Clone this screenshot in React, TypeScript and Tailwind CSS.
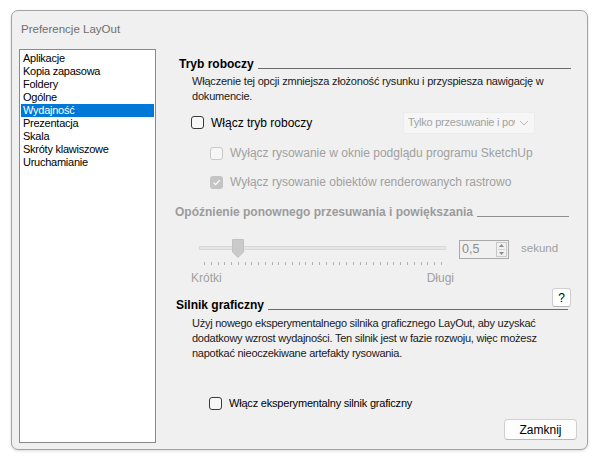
import React from "react";

const NAV_ITEMS = [
  "Aplikacje",
  "Kopia zapasowa",
  "Foldery",
  "Ogólne",
  "Wydajność",
  "Prezentacja",
  "Skala",
  "Skróty klawiszowe",
  "Uruchamianie",
];

const TICKS = Array.from({ length: 36 }, (_, i) => i);

function Checkbox({ checked = false, disabled = false }: { checked?: boolean; disabled?: boolean }) {
  if (checked && disabled) {
    return (
      <div className="w-[13px] h-[13px] rounded-[3px] bg-[#c4c4c4] flex items-center justify-center shrink-0">
        <svg width="9" height="9" viewBox="0 0 9 9">
          <path d="M1.5 4.6 L3.6 6.6 L7.6 2.2" fill="none" stroke="#fff" strokeWidth="1.3" />
        </svg>
      </div>
    );
  }
  return (
    <div
      className={
        disabled
          ? "w-[13px] h-[13px] rounded-[3px] border border-[#c9c9c9] bg-[#f6f6f6] shrink-0"
          : "w-[13px] h-[13px] rounded-[3px] border border-[#3a3a3a] bg-[#f7f7f7] shrink-0"
      }
    />
  );
}

function SectionHeader({ title, muted = false }: { title: string; muted?: boolean }) {
  return (
    <div className="flex items-end h-[16px]">
      <span className={muted ? "font-bold text-[#9b9b9b] leading-[16px]" : "font-bold text-black leading-[16px]"}>
        {title}
      </span>
      <div className={muted ? "flex-1 ml-[4px] mb-[3px] border-b border-[#8e8e8e]" : "flex-1 ml-[4px] mb-[3px] border-b border-[#6a6a6a]"} />
    </div>
  );
}

export default function App() {
  return (
    <div
      className="w-[598px] h-[461px] bg-white pt-[10px] pl-[11px] text-[12px] text-black"
      style={{ fontFamily: '"Liberation Sans", Arial, sans-serif' }}
    >
      <div className="w-[577px] h-[440px] rounded-[7px] border border-[#a3a3a3] bg-[#f0f0f0] shadow-[0_1px_3px_rgba(0,0,0,0.15)] flex flex-col overflow-hidden">
        {/* title */}
        <div className="h-[38px] shrink-0 pl-[9px] flex items-center text-[11.5px] text-[#6e6e6e]">Preferencje LayOut</div>

        <div className="flex flex-1 min-h-0 pl-[7px] pb-[6px]">
          {/* category list */}
          <div className="w-[137px] border border-[#8a8a8a] bg-white py-[2px] px-[1px] text-[11px] tracking-[-0.25px] leading-[13px]">
            {NAV_ITEMS.map((item) => (
              <div
                key={item}
                className={item === "Wydajność" ? "pl-[2px] bg-[#0078d7] text-white" : "pl-[2px] text-black"}
              >
                {item}
              </div>
            ))}
          </div>

          {/* settings panel */}
          <div className="flex-1 flex flex-col pl-[23px] pr-[16px]">
            <div className="mt-[7px]">
              <SectionHeader title="Tryb roboczy" />
            </div>
            <p className="mt-[2px] pl-[13px] leading-[15px] text-[11px] tracking-[-0.2px] text-[#1a1a1a]">
              Włączenie tej opcji zmniejsza złożoność rysunku i przyspiesza nawigację w dokumencie.
            </p>

            <div className="mt-[7px] h-[23px] flex items-center pl-[12px]">
              <Checkbox />
              <span className="ml-[7px]">Włącz tryb roboczy</span>
              <div className="ml-auto mr-[36px] w-[132px] h-[22px] bg-[#f6f6f6] border border-[#ececec] flex items-center pl-[4px] pr-[5px] text-[11px] tracking-[-0.25px] text-[#a2a2a2] overflow-hidden">
                <span className="whitespace-nowrap overflow-hidden flex-1">Tylko przesuwanie i powiększanie</span>
                <svg width="10" height="6" viewBox="0 0 10 6" className="ml-[4px] shrink-0">
                  <path d="M1 1 L5 5 L9 1" fill="none" stroke="#b8b8b8" strokeWidth="1" />
                </svg>
              </div>
            </div>

            <div className="mt-[9px] h-[20px] flex items-center pl-[31px] text-[#a0a0a0]">
              <Checkbox disabled />
              <span className="ml-[7px]">Wyłącz rysowanie w oknie podglądu programu SketchUp</span>
            </div>
            <div className="mt-[9px] h-[20px] flex items-center pl-[31px] text-[#a0a0a0]">
              <Checkbox checked disabled />
              <span className="ml-[7px]">Wyłącz rysowanie obiektów renderowanych rastrowo</span>
            </div>

            <div className="mt-[12px] -ml-[4px] mr-[2px]">
              <SectionHeader title="Opóźnienie ponownego przesuwania i powiększania" muted />
            </div>

            {/* slider row */}
            <div className="mt-[18px] h-[22px] flex items-center pl-[20px]">
              <div className="relative w-[247px] h-[22px]">
                <div className="absolute left-0 right-0 top-[8px] h-[4px] bg-[#e6e6e6] border border-[#d8d8d8]" />
                <svg width="12" height="19" viewBox="0 0 12 19" className="absolute left-[33px] top-[1px]">
                  <path d="M0.5 0.5 H11.5 V13 L6 18.5 L0.5 13 Z" fill="#cacaca" stroke="#c2c2c2" />
                </svg>
              </div>
              <div className="ml-[13px] w-[50px] h-[19px] border border-[#a9a9a9] flex items-center pl-[2px] text-[#8c8c8c]">
                <span className="flex-1 text-[12.5px]">0,5</span>
                <div className="w-[11px] h-[15px] mr-[1px] border border-[#c8c8c8] flex flex-col items-center justify-center gap-[2px]">
                  <svg width="5" height="3" viewBox="0 0 5 3">
                    <path d="M0 3 L2.5 0 L5 3 Z" fill="#8c8c8c" />
                  </svg>
                  <div className="w-[7px] border-b border-[#d4d4d4]" />
                  <svg width="5" height="3" viewBox="0 0 5 3">
                    <path d="M0 0 L2.5 3 L5 0 Z" fill="#8c8c8c" />
                  </svg>
                </div>
              </div>
              <span className="ml-[12px] text-[11.5px] text-[#a0a0a0]">sekund</span>
            </div>

            {/* ticks */}
            <div className="mt-[2px] h-[3px] pl-[25px] flex">
              {TICKS.map((t) => (
                <div key={t} className="w-[6.77px] shrink-0">
                  <div className="w-[1px] h-[3px] bg-[#b0b0b0]" />
                </div>
              ))}
            </div>

            <div className="mt-[5px] h-[16px] flex items-center pl-[12px] text-[#a0a0a0]">
              <span>Krótki</span>
              <span className="ml-[205px]">Długi</span>
            </div>

            <div className="relative mt-[4px] pt-[7px] -ml-[3px] mr-[3px]">
              <SectionHeader title="Silnik graficzny" />
              <button className="absolute -right-[3px] -top-[2px] w-[19px] h-[19px] rounded-[3px] bg-white border border-[#cfcfcf] border-b-[#b5b5b5] flex items-center justify-center text-[12px] text-black">
                ?
              </button>
            </div>

            <p className="mt-[3px] pl-[13px] leading-[15px] text-[11px] tracking-[-0.25px] text-[#1a1a1a]">
              Użyj nowego eksperymentalnego silnika graficznego LayOut, aby uzyskać dodatkowy wzrost wydajności. Ten silnik jest w fazie rozwoju, więc możesz napotkać nieoczekiwane artefakty rysowania.
            </p>

            <div className="mt-[32px] h-[20px] flex items-center pl-[30px]">
              <Checkbox />
              <span className="ml-[7px] text-[11px] tracking-[-0.2px]">Włącz eksperymentalny silnik graficzny</span>
            </div>

            <div className="mt-[6px] flex justify-end mr-[-6px]">
              <button className="w-[73px] h-[21px] rounded-[4px] bg-[#fdfdfd] border border-[#d0d0d0] border-b-[#b8b8b8] text-[12px] text-black">
                Zamknij
              </button>
            </div>
          </div>
        </div>
      </div>
    </div>
  );
}
